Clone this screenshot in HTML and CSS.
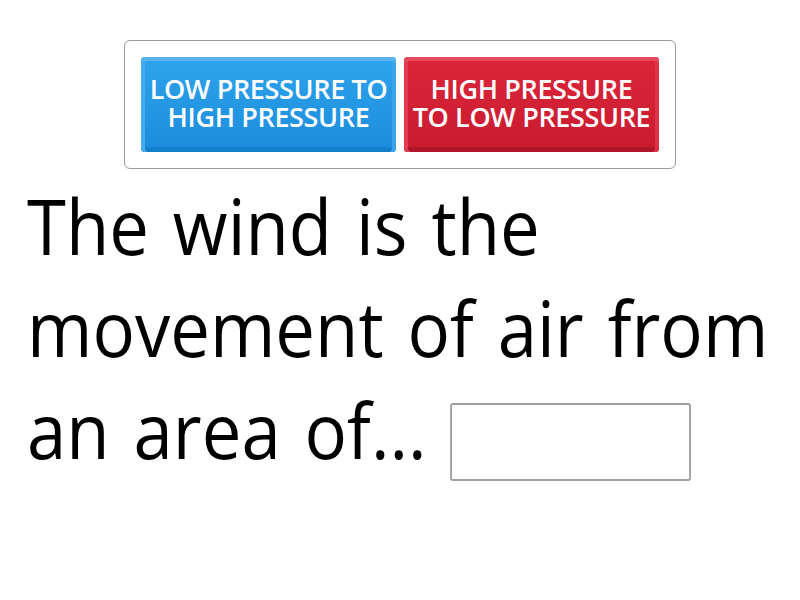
FILE: index.html
```html
<!DOCTYPE html>
<html lang="en">
<head>
<meta charset="utf-8">
<title>Wind</title>
<link rel="stylesheet" href="styles.css">
</head>
<body>
  <main class="quiz">
    <div class="choices">
      <button class="choice choice-blue">LOW PRESSURE TO HIGH PRESSURE</button>
      <button class="choice choice-red">HIGH PRESSURE TO LOW PRESSURE</button>
    </div>
    <p class="prompt">The wind is the movement of air from an area of... <span class="blank"></span></p>
  </main>
</body>
</html>
```

FILE: styles.css
```css
html, body {
  margin: 0;
  padding: 0;
  background: #fff;
}

body {
  width: 800px;
  height: 600px;
  overflow: hidden;
  font-family: "Open Sans", "Liberation Sans", sans-serif;
}

.quiz {
  display: flex;
  flex-direction: column;
  align-items: center;
  padding-top: 40px;
}

.choices {
  display: flex;
  gap: 8px;
  padding: 16px;
  border: 1px solid #9a9a9a;
  border-radius: 6px;
}

.choice {
  width: 255px;
  height: 95px;
  border: none;
  border-radius: 4px;
  padding: 0 8px 4px;
  color: #fff;
  font-family: "Open Sans", "Liberation Sans", sans-serif;
  font-weight: 600;
  font-size: 27px;
  line-height: 28px;
  letter-spacing: -0.35px;
  text-align: center;
  cursor: pointer;
}

.choice-blue {
  background: linear-gradient(#2fa3ec, #1b8cdb);
  box-shadow: inset 0 4px 0 #58b3f1, inset 4px 0 0 #45aaef,
              inset -4px 0 0 #3aa3ea, inset 0 -5px 0 #1380cc;
}

.choice-red {
  background: linear-gradient(#dc2539, #c81b30);
  box-shadow: inset 0 4px 0 #e44a5c, inset 4px 0 0 #e03b4e,
              inset -4px 0 0 #dd3247, inset 0 -5px 0 #ad1529;
}

/* The sentence is set in a slightly condensed face */
.prompt {
  align-self: flex-start;
  box-sizing: border-box;
  width: 860px;
  margin: 6px 0 0;
  padding: 0 0 0 29px;
  font-size: 76px;
  line-height: 102px;
  word-spacing: 6px;
  color: #000;
  transform: scaleX(0.93);
  transform-origin: 0 0;
}

.blank {
  display: inline-block;
  box-sizing: border-box;
  width: 259px;
  height: 78px;
  margin-left: 0;
  border: 2px solid #a0a0a0;
  border-radius: 3px;
  vertical-align: bottom;
}
```
